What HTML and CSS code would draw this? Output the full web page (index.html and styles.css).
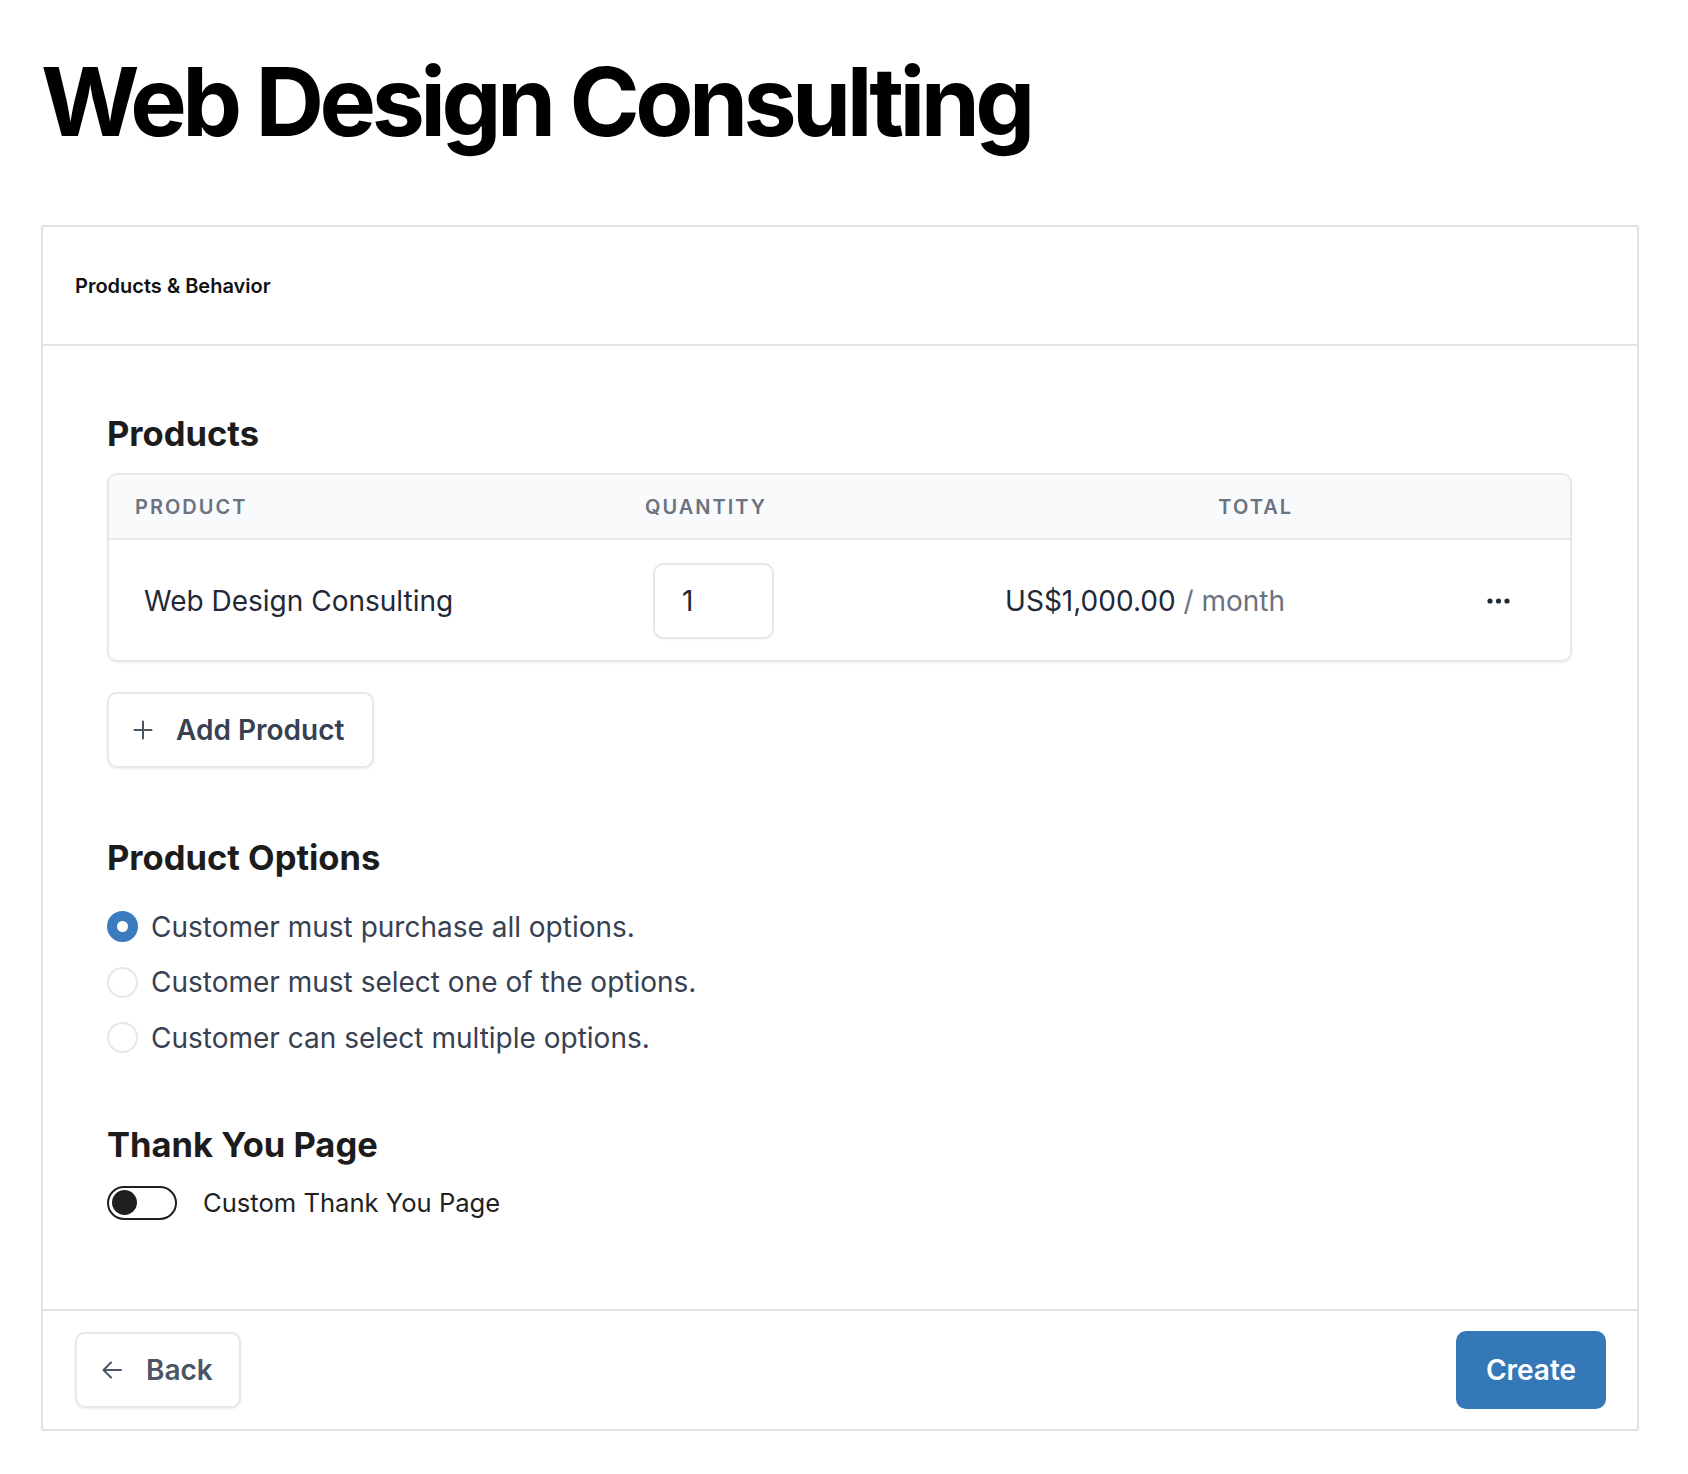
FILE: index.html
```html
<!DOCTYPE html>
<html lang="en">
<head>
<meta charset="utf-8">
<title>Web Design Consulting</title>
<link rel="stylesheet" href="styles.css">
</head>
<body>
<h1 class="page-title">Web Design Consulting</h1>
<div class="card">
  <div class="card-header">Products &amp; Behavior</div>
  <div class="card-body">
    <h2 class="section-title">Products</h2>
    <div class="table">
      <div class="thead">
        <div class="th th-product">PRODUCT</div>
        <div class="th th-qty">QUANTITY</div>
        <div class="th th-total">TOTAL</div>
        <div class="th th-actions"></div>
      </div>
      <div class="trow">
        <div class="td td-product">Web Design Consulting</div>
        <div class="td td-qty"><div class="qty-input">1</div></div>
        <div class="td td-total">US$1,000.00 <span class="per">/ month</span></div>
        <div class="td td-actions">
          <svg class="dots" width="24" height="8" viewBox="0 0 24 8"><circle cx="3" cy="4" r="2.6"/><circle cx="11.5" cy="4" r="2.6"/><circle cx="20" cy="4" r="2.6"/></svg>
        </div>
      </div>
    </div>
    <div class="btn btn-outline add-btn">
      <svg class="icon-plus" width="20" height="20" viewBox="0 0 20 20"><path d="M10 1.5v17M1.5 10h17" fill="none" stroke="currentColor" stroke-width="2" stroke-linecap="round"/></svg>
      <span>Add Product</span>
    </div>

    <h2 class="section-title options-title">Product Options</h2>
    <div class="radio-list">
      <div class="radio-row"><span class="radio checked"></span><span class="radio-label">Customer must purchase all options.</span></div>
      <div class="radio-row"><span class="radio"></span><span class="radio-label">Customer must select one of the options.</span></div>
      <div class="radio-row"><span class="radio"></span><span class="radio-label">Customer can select multiple options.</span></div>
    </div>

    <h2 class="section-title thanks-title">Thank You Page</h2>
    <div class="toggle-row">
      <span class="toggle"><span class="knob"></span></span>
      <span class="toggle-label">Custom Thank You Page</span>
    </div>
  </div>
  <div class="card-footer">
    <div class="btn btn-outline back-btn">
      <svg class="icon-arrow" width="22" height="20" viewBox="0 0 22 20"><path d="M20 10H3M10 2.5L2.5 10L10 17.5" fill="none" stroke="currentColor" stroke-width="2" stroke-linecap="round" stroke-linejoin="round"/></svg>
      <span>Back</span>
    </div>
    <div class="btn btn-primary">Create</div>
  </div>
</div>
</body>
</html>
```
FILE: styles.css
```css
* { box-sizing: border-box; }
html, body { background: #ffffff; }
body {
  margin: 0;
  padding: 0 49px 0 41px;
  font-family: Inter, "Liberation Sans", sans-serif;
  color: #1f2937;
}
.page-title {
  margin: 44px 0 66px 0;
  font-size: 95px;
  line-height: 115px;
  font-weight: 700;
  letter-spacing: -0.048em;
  color: #000;
}
.card {
  border: 2px solid #e2e2e2;
  border-radius: 2px;
  background: #fff;
}
.card-header {
  height: 119px;
  border-bottom: 2px solid #e2e2e2;
  display: flex;
  align-items: center;
  padding-left: 32px;
  font-size: 20px;
  line-height: 24px;
  font-weight: 600;
  color: #111;
}
.card-body {
  padding: 67px 65px 89px 64px;
}
.section-title {
  margin: 0;
  font-size: 34.5px;
  line-height: 41px;
  font-weight: 700;
  color: #1c1c1c;
}
.table {
  margin-top: 19px;
  border: 2px solid #e5e7eb;
  border-radius: 10px;
  box-shadow: 0 1px 3px rgba(0,0,0,0.06);
  overflow: hidden;
}
.thead, .trow {
  display: grid;
  grid-template-columns: 536px 355px 295px 1fr;
  align-items: center;
}
.thead {
  height: 65px;
  background: #f9fafb;
  border-bottom: 2px solid #e5e7eb;
  padding-top: 1px;
}
.th {
  font-size: 20px;
  line-height: 24px;
  font-weight: 600;
  letter-spacing: 0.1em;
  color: #6b7280;
}
.th-product { padding-left: 26px; }
.th-total { text-align: right; padding-right: 2px; }
.trow { height: 120px; padding-top: 2px; }
.td {
  font-size: 28px;
  line-height: 34px;
  color: #1f2937;
  white-space: nowrap;
}
.td-product { padding-left: 35px; }
.td-qty { padding-left: 8px; }
.qty-input {
  width: 121px;
  height: 76px;
  border: 2px solid #e5e7eb;
  border-radius: 10px;
  padding-left: 27px;
  display: flex;
  align-items: center;
  font-size: 28px;
  color: #1f2937;
  box-shadow: 0 1px 2px rgba(0,0,0,0.04);
}
.td-total { text-align: right; padding-right: 10px; }
.per { color: #6b7280; }
.td-actions { padding-left: 192px; display: flex; }
.dots { fill: #1f2937; }

.btn {
  display: inline-flex;
  align-items: center;
  border-radius: 10px;
  font-weight: 600;
  font-size: 28px;
  line-height: 34px;
}
.btn-outline {
  border: 2px solid #e5e7eb;
  background: #fff;
  color: #374151;
  box-shadow: 0 1px 3px rgba(0,0,0,0.08);
}
.add-btn {
  margin-top: 30px;
  width: 267px;
  height: 76px;
  padding-left: 24px;
  gap: 23px;
  font-size: 28px;
}
.icon-plus { color: #4b5563; flex: none; }

.options-title { margin-top: 69px; }
.radio-list {
  margin-top: 21px;
  display: flex;
  flex-direction: column;
}
.radio-row {
  height: 55.5px;
  display: flex;
  align-items: center;
  gap: 13px;
}
.radio {
  width: 31px;
  height: 31px;
  border-radius: 50%;
  border: 2px solid #e5e7eb;
  background: #fff;
  flex: none;
  display: flex;
  align-items: center;
  justify-content: center;
}
.radio.checked {
  border: none;
  background: #3b7cc0;
}
.radio.checked::after {
  content: "";
  width: 11px;
  height: 11px;
  border-radius: 50%;
  background: #fff;
}
.radio-label {
  font-size: 28px;
  line-height: 34px;
  color: #374151;
}
.thanks-title { margin-top: 58px; }
.toggle-row {
  margin-top: 21px;
  display: flex;
  align-items: center;
  gap: 26px;
  height: 34px;
}
.toggle {
  width: 70px;
  height: 34px;
  border: 2.5px solid #1f1f1f;
  border-radius: 17px;
  display: flex;
  align-items: center;
  padding-left: 3px;
  flex: none;
}
.knob {
  width: 25px;
  height: 25px;
  border-radius: 50%;
  background: #1f1f1f;
}
.toggle-label {
  font-size: 25.6px;
  line-height: 32px;
  color: #222;
}
.card-footer {
  border-top: 2px solid #e2e2e2;
  height: 120px;
  padding: 0 31px 0 32px;
  display: flex;
  align-items: center;
  justify-content: space-between;
}
.back-btn {
  width: 166px;
  height: 76px;
  padding-left: 24px;
  gap: 23px;
  color: #4b5563;
}
.icon-arrow { color: #4b5563; flex: none; }
.btn-primary {
  width: 150px;
  height: 78px;
  justify-content: center;
  background: #3578b8;
  color: #fff;
}
```
